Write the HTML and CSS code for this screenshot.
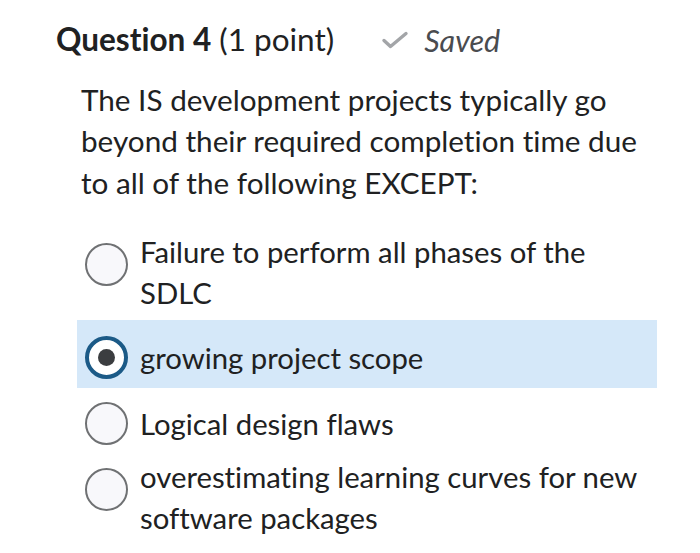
FILE: index.html
```html
<!DOCTYPE html>
<html lang="en">
<head>
<meta charset="utf-8">
<title>Question 4</title>
<link rel="stylesheet" href="styles.css">
</head>
<body>
<div class="page">
  <h2 class="q-head">
    <span class="q-title"><b>Question 4</b> (1 point)</span>
    <span class="saved">
      <svg class="check" width="28" height="18" viewBox="0 0 28 18" aria-hidden="true">
        <path d="M3 9.5 L9.5 15.5 L25 2.5" fill="none" stroke="#a3a5a8" stroke-width="3.4" stroke-linecap="round" stroke-linejoin="round"/>
      </svg>
      <span class="saved-text">Saved</span>
    </span>
  </h2>
  <p class="q-text">The IS development projects typically go beyond their required completion time due to all of the following EXCEPT:</p>
  <ul class="options">
    <li class="option multi"><span class="radio"></span><span class="label">Failure to perform all phases of the SDLC</span></li>
    <li class="option selected"><span class="radio"><span class="dot"></span></span><span class="label">growing project scope</span></li>
    <li class="option"><span class="radio"></span><span class="label">Logical design flaws</span></li>
    <li class="option multi"><span class="radio"></span><span class="label">overestimating learning curves for new software packages</span></li>
  </ul>
</div>
</body>
</html>
```
FILE: styles.css
```css
html, body {
  margin: 0;
  padding: 0;
  background: #ffffff;
}

body {
  font-family: Lato, "Open Sans", sans-serif;
  color: #202122;
  font-variant-ligatures: none;
  font-feature-settings: "liga" 0, "clig" 0;
}

.page {
  padding-top: 21px;
}

.q-head {
  margin: 0 0 0 56px;
  font-size: 31.5px;
  line-height: 1.2;
  font-weight: 400;
  display: flex;
  align-items: center;
}

.q-title b {
  font-weight: 700;
}

.saved {
  display: flex;
  align-items: center;
  margin-left: 47px;
  color: #4a4c4f;
}

.check {
  display: block;
  margin-top: 1px;
}

.saved-text {
  font-style: italic;
  font-size: 30.5px;
  margin-left: 15px;
}

.q-text {
  margin: 20px 0 0 81px;
  width: 560px;
  font-size: 29.7px;
  line-height: 41.5px;
}

.options {
  list-style: none;
  margin: 22px 0 0 77px;
  padding: 0;
  width: 580px;
}

.option {
  display: flex;
  align-items: center;
  gap: 12px;
  padding: 5.5px 8px;
}

.option.multi {
  align-items: flex-start;
}

.option.multi .radio {
  margin-top: 12px;
}

.option.selected {
  background: #d5e8f9;
  margin-top: 1.5px;
  margin-bottom: 9px;
  padding-top: 16px;
  padding-bottom: 9px;
}

.radio {
  flex: 0 0 auto;
  width: 43px;
  height: 43px;
  box-sizing: border-box;
  border-radius: 50%;
  border: 2px solid #6f7173;
  background: #f8f8fb;
  display: flex;
  align-items: center;
  justify-content: center;
}

.selected .radio {
  border: 4px solid #1b5a87;
  background: #ffffff;
}

.dot {
  width: 17px;
  height: 17px;
  border-radius: 50%;
  background: #3b3d40;
}

.label {
  font-size: 29.3px;
  line-height: 41px;
}
```
